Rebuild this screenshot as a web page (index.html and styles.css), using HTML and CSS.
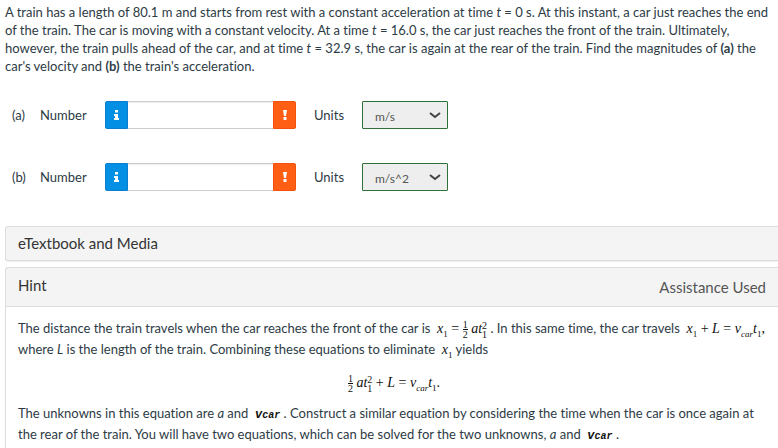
FILE: index.html
```
<!DOCTYPE html>
<html lang="en">
<head>
  <meta charset="UTF-8" />
  <meta name="viewport" content="width=device-width, initial-scale=1" />
  <title>Train and Car Problem</title>
  <link rel="stylesheet" href="styles.css">
</head>
<body>

<main class="question">
  <p class="prompt">A train has a length of 80.1 m and starts from rest with a constant acceleration at time <i>t</i> = 0 s. At this instant, a car just reaches the end of the train. The car is moving with a constant velocity. At a time <i>t</i> = 16.0 s, the car just reaches the front of the train. Ultimately, however, the train pulls ahead of the car, and at time <i>t</i> = 32.9 s, the car is again at the rear of the train. Find the magnitudes of <b>(a)</b> the car's velocity and <b>(b)</b> the train's acceleration.</p>

  <div class="answer">
    <span class="part">(a)</span>
    <label class="number" for="number-a">Number</label>
    <div class="input-group">
      <button type="button" class="info" aria-label="Information">
        <svg width="6" height="10" viewBox="0 0 6 10"><path d="M1 0h3v2.500H1zM0 4h4v4h1v2H0V8h1V6H0z"/></svg>
      </button>
      <input type="text" id="number-a">
      <button type="button" class="alert" aria-label="Incorrect answer">
        <svg width="4" height="10" viewBox="0 0 4 10"><path d="M0 0h4L3 6H1zM.5 7h3v3h-3z"/></svg>
      </button>
    </div>
    <label class="units" for="units-a">Units</label>
    <div class="select-wrap">
      <select id="units-a"><option>m/s</option><option>m/s^2</option></select>
      <svg class="chevron" width="12" height="7" viewBox="0 0 12 7"><path d="M1 1l5 4 5-4"/></svg>
    </div>
  </div>

  <div class="answer">
    <span class="part">(b)</span>
    <label class="number" for="number-b">Number</label>
    <div class="input-group">
      <button type="button" class="info" aria-label="Information">
        <svg width="6" height="10" viewBox="0 0 6 10"><path d="M1 0h3v2.500H1zM0 4h4v4h1v2H0V8h1V6H0z"/></svg>
      </button>
      <input type="text" id="number-b">
      <button type="button" class="alert" aria-label="Incorrect answer">
        <svg width="4" height="10" viewBox="0 0 4 10"><path d="M0 0h4L3 6H1zM.5 7h3v3h-3z"/></svg>
      </button>
    </div>
    <label class="units" for="units-b">Units</label>
    <div class="select-wrap">
      <select id="units-b"><option>m/s^2</option><option>m/s</option></select>
      <svg class="chevron" width="12" height="7" viewBox="0 0 12 7"><path d="M1 1l5 4 5-4"/></svg>
    </div>
  </div>

  <section class="panel media">
    <h2>eTextbook and Media</h2>
  </section>

  <section class="panel hint">
    <header>
      <h2>Hint</h2>
      <span class="assistance">Assistance Used</span>
    </header>
    <div class="hint-body">
      <p>The distance the train travels when the car reaches the front of the car is &nbsp;<span class="math"><i>x</i><sub>1</sub> = <span class="frac"><span>1</span><span>2</span></span> <i>at</i><span class="stack"><span>2</span><span>1</span></span></span> . In this same time, the car travels &nbsp;<span class="math"><i>x</i><sub>1</sub> + <i>L</i> = <i>v</i><sub><i>car</i></sub><i>t</i><sub>1</sub>,</span> where <i>L</i> is the length of the train. Combining these equations to eliminate &nbsp;<span class="math"><i>x</i><sub>1</sub></span> yields</p>
      <p class="equation"><span class="math"><span class="frac"><span>1</span><span>2</span></span> <i>at</i><span class="stack"><span>2</span><span>1</span></span> + <i>L</i> = <i>v</i><sub><i>car</i></sub><i>t</i><sub>1</sub>.</span></p>
      <p>The unknowns in this equation are <i>a</i> and &nbsp;<span class="vcar">v<small>car</small></span> . Construct a similar equation by considering the time when the car is once again at the rear of the train. You will have two equations, which can be solved for the two unknowns, <i>a</i> and &nbsp;<span class="vcar">v<small>car</small></span> .</p>
    </div>
  </section>
</main>

</body>
</html>
```
FILE: styles.css
```
* {
  box-sizing: border-box;
}
body {
  margin: 0;
  background: #fff;
  color: #2d3b45;
  font-family: Lato, "Liberation Sans", sans-serif;
  font-size: 13px;
  font-variant-ligatures: none;
  line-height: 18px;
}
.question {
  padding: 3px 0 0 5px;
}
p {
  margin: 0;
}
.prompt {
  margin-bottom: 26px;
}

/* Answer rows */
.answer {
  display: flex;
  align-items: center;
  height: 28px;
  margin-bottom: 34px;
  padding-left: 7px;
}
.part {
  width: 28px;
}
.number {
  width: 65px;
}
.input-group {
  display: flex;
  width: 191px;
  height: 28px;
}
.input-group input {
  flex: 1;
  min-width: 0;
  border: 1px solid #ccc;
  border-width: 1px 0;
  padding: 0 8px;
  font: inherit;
  box-shadow: inset 0 1px 1px #eee;
}
.input-group button {
  display: flex;
  align-items: center;
  justify-content: center;
  width: 23px;
  padding: 0;
  border: 1px solid #0b7ed0;
  border-radius: 2px 0 0 2px;
  background: #038fe4;
}
.input-group .alert {
  border-color: #f5500c;
  border-radius: 0 2px 2px 0;
  background: #ff5f15;
}
.input-group svg {
  fill: #fff;
}
.units {
  width: 66px;
  padding-left: 18px;
}
.select-wrap {
  position: relative;
  width: 86px;
}
select {
  display: block;
  appearance: none;
  width: 100%;
  height: 28px;
  padding: 2px 24px 0 12px;
  border: 1px solid #2f7038;
  border-radius: 1px;
  background: #eee;
  color: #555;
  font: 12px Lato, "Liberation Sans", sans-serif;
}
.chevron {
  position: absolute;
  top: 11px;
  right: 7px;
  fill: none;
  stroke: #444;
  stroke-width: 2;
  pointer-events: none;
}

/* Panels */
.panel {
  border: 1px solid #ddd;
  border-right: 0;
  border-radius: 3px 0 0 0;
  background: #f4f4f4;
}
h2 {
  margin: 0;
  color: #333;
  font-size: 15px;
  font-weight: normal;
}
.media {
  margin: 35px 0 6px;
  padding: 7px 12px 8px;
  border-radius: 3px 0 0 3px;
  box-shadow: 0 1px 1px #eee;
}
.hint header {
  display: flex;
  justify-content: space-between;
  padding: 8px 12px 10px;
  border-bottom: 1px solid #ddd;
}
.assistance {
  padding-top: 2px;
  color: #555;
  font-size: 15px;
}
.hint-body {
  padding: 11px 8px 8px 12px;
  background: #fff;
  line-height: 21px;
}

/* Formulas */
.math {
  color: #111;
  font-family: "Liberation Serif", serif;
  font-size: 14px;
  line-height: 16px;
  white-space: nowrap;
}
.math sub {
  font-size: 9px;
  line-height: 9px;
}
.frac, .stack {
  display: inline-flex;
  flex-direction: column;
  margin: -4px 0;
  font-size: 10px;
  line-height: 9px;
  vertical-align: middle;
}
.frac span + span {
  border-top: 1px solid #111;
}
.equation {
  padding: 12px 0 10px;
  text-align: center;
}
.vcar {
  color: #111;
  font: italic bold 12px "Liberation Mono", monospace;
}
.vcar small {
  font-size: 10px;
}
```
